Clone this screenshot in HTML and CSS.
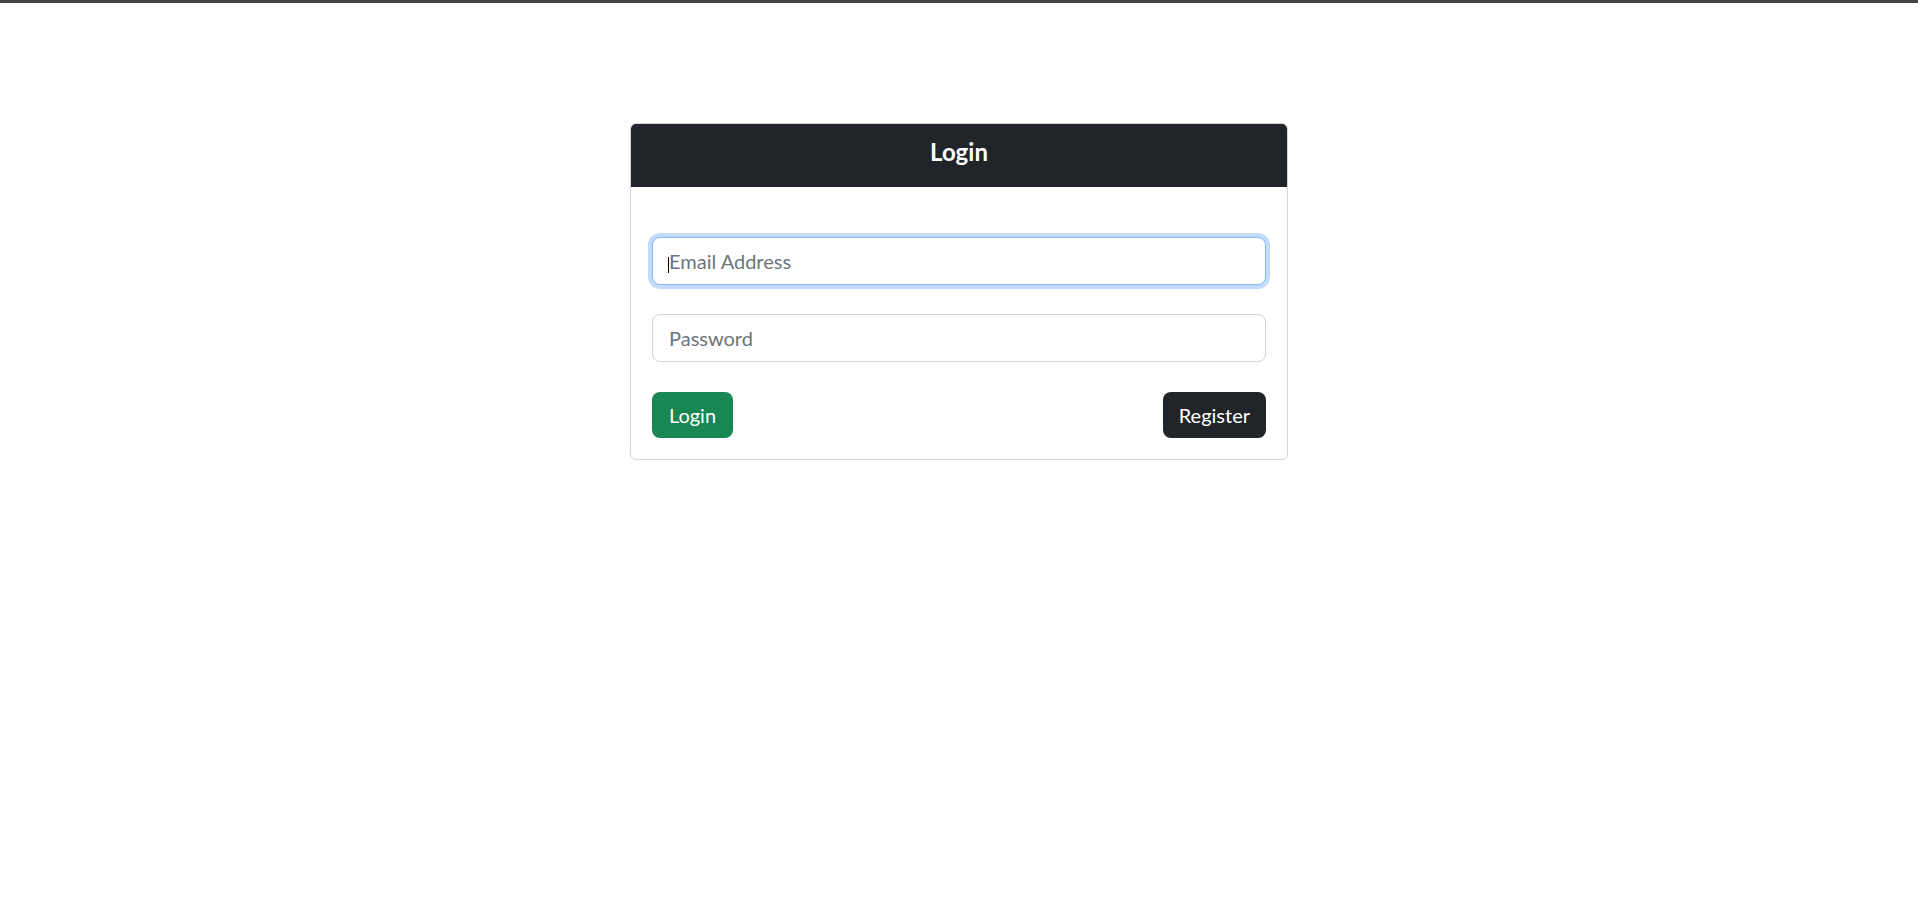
FILE: index.html
```html
<!DOCTYPE html>
<html lang="en">
<head>
<meta charset="utf-8">
<title>Login</title>
<link rel="stylesheet" href="styles.css">
</head>
<body>
<div class="topbar"></div>
<main class="page">
  <section class="card">
    <header class="card-header"><h4 class="card-title">Login</h4></header>
    <form class="card-body">
      <div class="field">
        <input class="form-control is-focused" type="email" placeholder="Email Address">
        <span class="caret"></span>
      </div>
      <div class="field">
        <input class="form-control" type="password" placeholder="Password">
      </div>
      <div class="actions">
        <button type="button" class="btn btn-success">Login</button>
        <button type="button" class="btn btn-dark">Register</button>
      </div>
    </form>
  </section>
</main>
</body>
</html>
```
FILE: styles.css
```css
html, body { margin: 0; padding: 0; background: #fff; }
body { font-family: "Lato", "Open Sans", sans-serif; color: #212529; }
.topbar { height: 3px; background: #444; }
.page { display: flex; justify-content: center; padding-top: 120px; }
.card { width: 656px; border: 1px solid #d5d5d5; border-radius: 6px; overflow: hidden; background: #fff; }
.card-header { height: 63px; background: #212529; display: flex; justify-content: center; align-items: flex-start; padding-top: 13px; box-sizing: border-box; }
.card-title { margin: 0; color: #fff; font-size: 24px; font-weight: 700; line-height: 29px; }
.card-body { display: flex; flex-direction: column; padding: 50px 21px 21px; }
.field { position: relative; margin-bottom: 29px; }
.form-control { display: block; width: 100%; box-sizing: border-box; height: 48px; padding: 0 16px; font-family: inherit; font-size: 20px; color: #212529; border: 1px solid #ced4da; border-radius: 8px; outline: none; background: #fff; }
.form-control::placeholder { color: #6c757d; }
.form-control.is-focused { border-color: #86b7fe; box-shadow: 0 0 0 4px rgba(13,110,253,.25); }
.caret { position: absolute; left: 16px; top: 20px; width: 1px; height: 16px; background: #000; }
.actions { display: flex; justify-content: space-between; margin-top: 1px; }
.btn { height: 46px; padding: 0 16px; font-family: inherit; font-size: 20px; border: 0; border-radius: 8px; color: #fff; cursor: pointer; }
.btn-success { background: #198754; min-width: 81px; }
.btn-dark { background: #212529; }
```
